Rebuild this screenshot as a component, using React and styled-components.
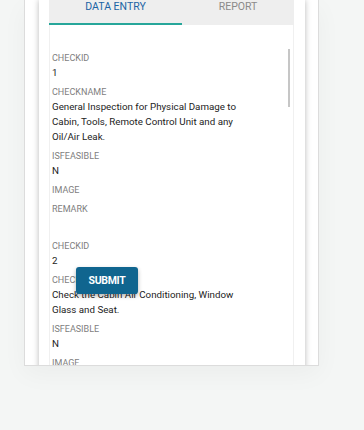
import React from "react";
import styled, { createGlobalStyle } from "styled-components";

const GlobalStyle = createGlobalStyle`
  html, body {
    margin: 0;
    padding: 0;
    background: #f4f6f5;
    font-family: Roboto, "Liberation Sans", Arial, sans-serif;
  }
`;

const checks = [
  {
    id: "1",
    name: "General Inspection for Physical Damage to Cabin, Tools, Remote Control Unit and any Oil/Air Leak.",
    feasible: "N",
  },
  {
    id: "2",
    name: "Check the Cabin Air Conditioning, Window Glass and Seat.",
    feasible: "N",
  },
];

const App = () => {
  return (
    <Page>
      <GlobalStyle />
      <Frame>
        <Panel>
          <Tabs>
            <Tab active>Data Entry</Tab>
            <Tab>Report</Tab>
          </Tabs>
          <Content>
            {checks.map((c) => (
              <Record key={c.id}>
                <Label>CheckId</Label>
                <Value>{c.id}</Value>
                <Label>CheckName</Label>
                <Value>{c.name}</Value>
                <Label>IsFeasible</Label>
                <Value>{c.feasible}</Value>
                <Label>Image</Label>
                <Label>Remark</Label>
              </Record>
            ))}
            <Scrollbar />
            <SubmitButton>Submit</SubmitButton>
          </Content>
        </Panel>
      </Frame>
    </Page>
  );
};

export default App;

const Page = styled.div`
  height: 430px;
  padding-left: 24px;
  overflow: hidden;
`;

const Frame = styled.div`
  width: 295px;
  height: 366px;
  background: #fff;
  border: 1px solid #dcdcdc;
  border-top: none;
  box-shadow: 0 8px 24px rgba(0, 0, 0, 0.04);
  padding-left: 14px;
  overflow: hidden;
  box-sizing: border-box;
`;

const Panel = styled.div`
  width: 266px;
  min-height: 420px;
  background: #fff;
  box-shadow: 0 0 6px rgba(0, 0, 0, 0.28);
  padding: 0 11px 0 10px;
  box-sizing: border-box;
`;

const Tabs = styled.div`
  display: flex;
  background: #eeeeee;
`;

const Tab = styled.div`
  flex: ${(p) => (p.active ? "0 0 133px" : "1")};
  text-align: center;
  text-transform: uppercase;
  font-size: 10.5px;
  line-height: 12px;
  padding: 1px 0 10px;
  color: ${(p) => (p.active ? "#1b64a5" : "#8a8a8a")};
  border-bottom: 2px solid ${(p) => (p.active ? "#26a69a" : "transparent")};
`;

const Content = styled.div`
  position: relative;
  border-left: 1px solid #f0f0f0;
  border-right: 1px solid #f0f0f0;
  padding: 27px 0 0 2px;
  min-height: 400px;
`;

const Record = styled.div`
  padding-bottom: 24px;
`;

const Label = styled.div`
  font-size: 9px;
  line-height: 13px;
  color: #7e7e7e;
  text-transform: uppercase;

  & + & {
    margin-top: 6px;
  }
`;

const Value = styled.div`
  font-size: 9.75px;
  line-height: 15px;
  color: #222;
  max-width: 200px;
  margin-bottom: 6px;
`;

const Scrollbar = styled.div`
  position: absolute;
  left: 238px;
  top: 24px;
  width: 2px;
  height: 58px;
  background: #c6c6c6;
`;

const SubmitButton = styled.button`
  position: absolute;
  left: 26px;
  top: 242px;
  width: 62px;
  height: 27px;
  border: none;
  border-radius: 3px;
  background: #10658f;
  color: #fff;
  font-family: Roboto, "Liberation Sans", Arial, sans-serif;
  font-weight: 700;
  font-size: 10.5px;
  text-transform: uppercase;
  letter-spacing: -0.3px;
  box-shadow: 0 2px 4px rgba(0, 0, 0, 0.3);
  padding: 0;
`;
